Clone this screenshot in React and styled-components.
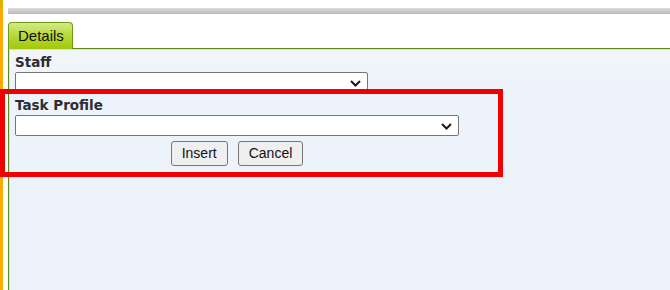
import React from "react";
import styled, { createGlobalStyle } from "styled-components";

const Global = createGlobalStyle`
  html, body { margin: 0; padding: 0; background: #ffffff; }
  body { font-family: "Liberation Sans", Arial, sans-serif; overflow: hidden; }
  #root { height: 290px; }
`;

const Page = styled.div`
  position: relative;
  display: flex;
  height: 290px;
  width: 670px;
`;

const SideBar = styled.div`
  width: 3px;
  flex: none;
  background: linear-gradient(#d4b400 0px, #ffaa00 12px, #ffaa00 100%);
`;

const Gutter = styled.div`
  width: 5px;
  flex: none;
  background: #ffffff;
`;

const Main = styled.div`
  flex: 1;
  display: flex;
  flex-direction: column;
  padding-top: 8px;
  min-width: 0;
`;

const TopRule = styled.div`
  height: 6px;
  background: linear-gradient(#dadada, #c4c4c4 70%, #b8b8b8);
`;

const TabStrip = styled.div`
  display: flex;
  padding-top: 8px;
  height: 26px;
  box-sizing: content-box;
`;

const Tab = styled.div`
  box-sizing: border-box;
  width: 65px;
  height: 27px;
  border: 1px solid #6f9c16;
  border-bottom: none;
  border-radius: 4px 4px 0 0;
  background: linear-gradient(#d4ea88 0%, #b9d93c 45%, #a3c808 100%);
  color: #111;
  font-size: 15px;
  line-height: 25px;
  padding-left: 9px;
  position: relative;
  z-index: 1;
`;

const Panel = styled.div`
  flex: 1;
  border-top: 1px solid #5e8a1c;
  border-left: 1px solid #5e8a1c;
  background: linear-gradient(#f3f6f9 0px, #edf3fa 40px, #ecf2fa 100%);
  box-shadow: inset 1px 1px 0 #cfe3f0;
  padding: 5px 6px 0 6px;
  display: flex;
  flex-direction: column;
`;

const Label = styled.div`
  font-family: "DejaVu Sans", Verdana, sans-serif;
  font-weight: bold;
  font-size: 13.5px;
  line-height: 16px;
  color: #2d2d33;
  margin-top: ${(p) => p.$top || 0}px;
`;

const SelectWrap = styled.div`
  position: relative;
  width: ${(p) => p.$w}px;
  height: 21px;
  margin-top: 2px;
`;

const Select = styled.select`
  appearance: none;
  -webkit-appearance: none;
  box-sizing: border-box;
  width: 100%;
  height: 100%;
  margin: 0;
  border: 1px solid #767676;
  border-radius: 2px;
  background: #ffffff;
  font-family: "Liberation Sans", Arial, sans-serif;
  font-size: 13px;
  outline: none;
`;

const Chevron = styled.svg`
  position: absolute;
  right: 7px;
  top: 8px;
  pointer-events: none;
`;

const ButtonRow = styled.div`
  width: 444px;
  display: flex;
  justify-content: center;
  gap: 10px;
  margin-top: 5px;
`;

const Button = styled.button`
  box-sizing: border-box;
  height: 25px;
  padding: 0 10px;
  border: 1px solid #767676;
  border-radius: 3px;
  background: #efefef;
  color: #111;
  font-family: "Liberation Sans", Arial, sans-serif;
  font-size: 14px;
  line-height: 23px;
  margin: 0;
`;

const Highlight = styled.div`
  position: absolute;
  left: 0;
  top: 89px;
  width: 503px;
  height: 88px;
  box-sizing: border-box;
  border: 5px solid #f00000;
  pointer-events: none;
`;

const Dropdown = ({ width }) => (
  <SelectWrap $w={width}>
    <Select>
      <option value=""></option>
    </Select>
    <Chevron width="11" height="7" viewBox="0 0 11 7">
      <path d="M1 1 L5.5 5.5 L10 1" fill="none" stroke="#1a1a1a" strokeWidth="2" />
    </Chevron>
  </SelectWrap>
);

export default function App() {
  return (
    <>
      <Global />
      <Page>
        <SideBar />
        <Gutter />
        <Main>
          <TopRule />
          <TabStrip>
            <Tab>Details</Tab>
          </TabStrip>
          <Panel>
            <Label>Staff</Label>
            <Dropdown width={353} />
            <Label $top={4}>Task Profile</Label>
            <Dropdown width={444} />
            <ButtonRow>
              <Button>Insert</Button>
              <Button>Cancel</Button>
            </ButtonRow>
          </Panel>
        </Main>
        <Highlight />
      </Page>
    </>
  );
}
